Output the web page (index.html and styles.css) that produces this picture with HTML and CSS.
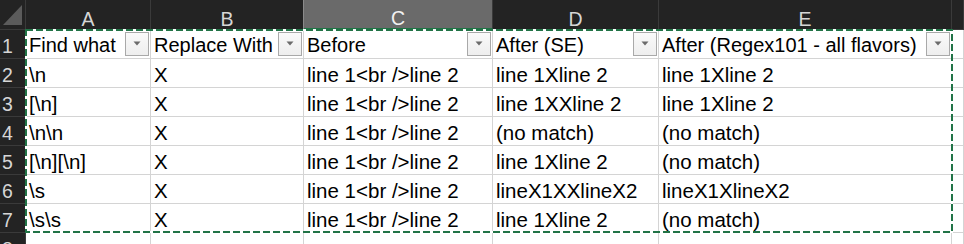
FILE: index.html
```html
<!DOCTYPE html>
<html lang="en">
<head>
<meta charset="utf-8">
<title>Regex replace comparison</title>
<link rel="stylesheet" href="styles.css">
</head>
<body>
<div class="sheet">
  <div class="grid">
    <!-- column headings -->
    <div class="corner"><svg width="25" height="29" viewBox="0 0 25 29"><polygon points="3,25 22,25 22,5" fill="#5b5b5b"/></svg></div>
    <div class="col-head">A</div>
    <div class="col-head">B</div>
    <div class="col-head selected">C</div>
    <div class="col-head">D</div>
    <div class="col-head">E</div>
    <div class="col-head"></div>

    <!-- row 1: table header with filter buttons -->
    <div class="row-head">1</div>
    <div class="cell filter"><span>Find what</span><span class="drop"><svg width="8" height="5" viewBox="0 0 8 5"><polygon points="0.5,0.5 7.5,0.5 4,4.5" fill="#6b6b6b"/></svg></span></div>
    <div class="cell filter"><span>Replace With</span><span class="drop"><svg width="8" height="5" viewBox="0 0 8 5"><polygon points="0.5,0.5 7.5,0.5 4,4.5" fill="#6b6b6b"/></svg></span></div>
    <div class="cell filter"><span>Before</span><span class="drop"><svg width="8" height="5" viewBox="0 0 8 5"><polygon points="0.5,0.5 7.5,0.5 4,4.5" fill="#6b6b6b"/></svg></span></div>
    <div class="cell filter"><span>After (SE)</span><span class="drop"><svg width="8" height="5" viewBox="0 0 8 5"><polygon points="0.5,0.5 7.5,0.5 4,4.5" fill="#6b6b6b"/></svg></span></div>
    <div class="cell filter"><span>After (Regex101 - all flavors)</span><span class="drop"><svg width="8" height="5" viewBox="0 0 8 5"><polygon points="0.5,0.5 7.5,0.5 4,4.5" fill="#6b6b6b"/></svg></span></div>
    <div class="cell"></div>

    <div class="row-head">2</div>
    <div class="cell">\n</div>
    <div class="cell">X</div>
    <div class="cell">line 1&lt;br /&gt;line 2</div>
    <div class="cell">line 1Xline 2</div>
    <div class="cell">line 1Xline 2</div>
    <div class="cell"></div>

    <div class="row-head">3</div>
    <div class="cell">[\n]</div>
    <div class="cell">X</div>
    <div class="cell">line 1&lt;br /&gt;line 2</div>
    <div class="cell">line 1XXline 2</div>
    <div class="cell">line 1Xline 2</div>
    <div class="cell"></div>

    <div class="row-head">4</div>
    <div class="cell">\n\n</div>
    <div class="cell">X</div>
    <div class="cell">line 1&lt;br /&gt;line 2</div>
    <div class="cell">(no match)</div>
    <div class="cell">(no match)</div>
    <div class="cell"></div>

    <div class="row-head">5</div>
    <div class="cell">[\n][\n]</div>
    <div class="cell">X</div>
    <div class="cell">line 1&lt;br /&gt;line 2</div>
    <div class="cell">line 1Xline 2</div>
    <div class="cell">(no match)</div>
    <div class="cell"></div>

    <div class="row-head">6</div>
    <div class="cell">\s</div>
    <div class="cell">X</div>
    <div class="cell">line 1&lt;br /&gt;line 2</div>
    <div class="cell">lineX1XXlineX2</div>
    <div class="cell">lineX1XlineX2</div>
    <div class="cell"></div>

    <div class="row-head">7</div>
    <div class="cell">\s\s</div>
    <div class="cell">X</div>
    <div class="cell">line 1&lt;br /&gt;line 2</div>
    <div class="cell">line 1Xline 2</div>
    <div class="cell">(no match)</div>
    <div class="cell"></div>

    <div class="row-head">8</div>
    <div class="cell"></div>
    <div class="cell"></div>
    <div class="cell"></div>
    <div class="cell"></div>
    <div class="cell"></div>
    <div class="cell"></div>
  </div>

  <!-- copy marquee around A1:E7 -->
  <svg class="marquee" width="928" height="204" viewBox="0 0 928 204">
    <rect x="1" y="1" width="926" height="202" fill="none" stroke="#ffffff" stroke-width="2"/>
    <rect x="1" y="1" width="926" height="202" fill="none" stroke="#217346" stroke-width="2" stroke-dasharray="7 3"/>
  </svg>
</div>
</body>
</html>
```

FILE: styles.css
```css
html, body {
  margin: 0;
  padding: 0;
  background: #ffffff;
  overflow: hidden;
}

.sheet {
  position: relative;
  width: 964px;
  height: 244px;
  overflow: hidden;
  font-family: "Liberation Sans", Arial, sans-serif;
}

.grid {
  display: grid;
  grid-template-columns: 26px 125px 153px 189px 166px 293px 1fr;
  grid-template-rows: 30px repeat(8, 29px);
}

.corner,
.col-head,
.row-head {
  background: #232323;
  color: #d6d6d6;
  box-sizing: border-box;
  border-right: 1px solid #3a3a3a;
  border-bottom: 1px solid #3a3a3a;
}

.corner {
  display: flex;
}

.col-head {
  display: flex;
  justify-content: center;
  align-items: flex-end;
  font-size: 19.5px;
  line-height: 20px;
}

.col-head.selected {
  background: #6a6a6a;
  color: #f2f2f2;
  border-left: 1px solid #8a8a8a;
  border-bottom: 2px solid #217346;
  margin-left: -1px;
}

.row-head {
  display: flex;
  align-items: flex-end;
  font-size: 19.5px;
  line-height: 22px;
  padding: 0 0 1px 2px;
}

.cell {
  box-sizing: border-box;
  border-right: 1px solid #d4d4d4;
  border-bottom: 1px solid #d4d4d4;
  background: #ffffff;
  color: #000000;
  font-size: 20.5px;
  line-height: 23px;
  padding: 0 0 1px 3px;
  display: flex;
  align-items: flex-end;
  white-space: nowrap;
}

.cell.filter {
  justify-content: space-between;
  font-size: 20px;
}

.drop {
  align-self: center;
  box-sizing: border-box;
  width: 24px;
  height: 24px;
  margin-right: 1px;
  border: 1px solid #a9a9a9;
  background: linear-gradient(#fafafa, #eeeeee);
  display: flex;
  justify-content: center;
  align-items: center;
  flex-shrink: 0;
}

.drop svg {
  display: block;
}

.marquee {
  position: absolute;
  left: 25px;
  top: 29px;
  display: block;
}
```
